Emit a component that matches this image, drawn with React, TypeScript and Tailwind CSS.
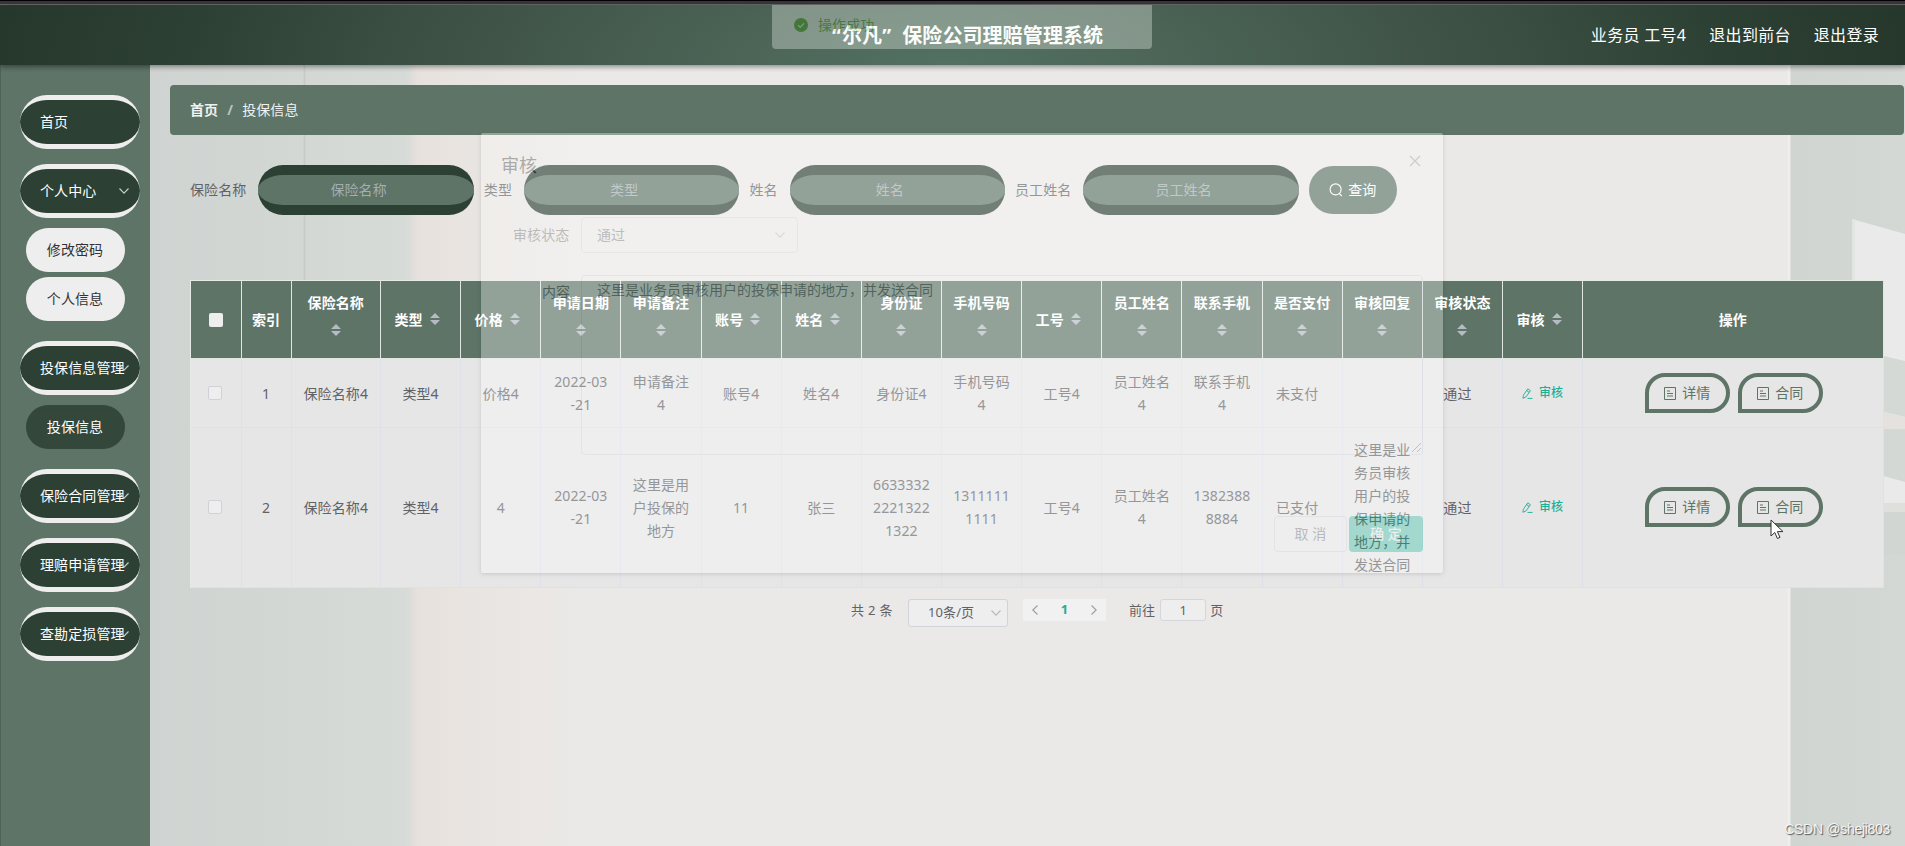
import React from 'react';

const FONT = "font-['Noto_Sans','Noto_Sans_CJK_SC',sans-serif]";

function Chevron({ className }: { className?: string }) {
  return (
    <svg viewBox="0 0 12 12" className={className} fill="none" stroke="currentColor" strokeWidth="1.1">
      <path d="M1.5 3.5 6 8.2l4.5-4.7" />
    </svg>
  );
}

function MenuPill({ label, arrow = true }: { label: string; arrow?: boolean }) {
  return (
    <div className="relative flex h-[54px] w-[120px] items-center rounded-full border-y-[5px] border-[#eeeeee] bg-[#2d4034] pl-5 text-sm text-white">
      <span className="whitespace-nowrap">{label}</span>
      {arrow && <Chevron className="absolute right-[10px] top-4 h-3 w-3 text-[#c9d0cb]" />}
    </div>
  );
}

function SubPill({ label, active = false }: { label: string; active?: boolean }) {
  return (
    <div
      className={
        active
          ? 'flex h-11 w-[99px] items-center justify-center rounded-full bg-[#33473b] pr-px text-sm text-white'
          : 'flex h-11 w-[99px] items-center justify-center rounded-full bg-[#eeeeee] pr-px text-sm text-[#333333]'
      }
    >
      {label}
    </div>
  );
}

function Sidebar() {
  return (
    <aside className="flex w-[150px] shrink-0 flex-col gap-[15px] bg-[#5d7467] pl-5 pt-[30px] shadow-[inset_1px_0_0_#4d6558]">
      <MenuPill label="首页" arrow={false} />
      <div>
        <MenuPill label="个人中心" />
        <div className="flex flex-col gap-[5px] pb-[5px] pl-[6px] pt-[10px]">
          <SubPill label="修改密码" />
          <SubPill label="个人信息" />
        </div>
      </div>
      <div>
        <MenuPill label="投保信息管理" />
        <div className="flex flex-col pb-[5px] pl-[6px] pt-[10px]">
          <SubPill label="投保信息" active />
        </div>
      </div>
      <MenuPill label="保险合同管理" />
      <MenuPill label="理赔申请管理" />
      <MenuPill label="查勘定损管理" />
    </aside>
  );
}

function Header() {
  return (
    <header className="relative z-10 flex h-[60px] shrink-0 items-center bg-[radial-gradient(ellipse_960px_330px_at_50%_100%,#527162_0%,#4d6658_20%,#3b4f42_58%,#2d4034_80%,#26382b_100%)] pl-[832px] shadow-[0_2px_5px_rgba(0,0,0,0.4)]">
      <h1 className="flex w-[272px] shrink-0 whitespace-nowrap pt-[2px] text-xl font-bold leading-[60px] text-white">
        <span className="w-[10px]">“</span>
        <span>尔凡</span>
        <span className="w-5">”</span>
        <span>保险公司理赔管理系统</span>
      </h1>
      <div className="flex flex-1 justify-end gap-[23px] pr-[26px] text-base tracking-[0.3px] text-white">
        <span>业务员 工号4</span>
        <span>退出到前台</span>
        <span>退出登录</span>
      </div>
    </header>
  );
}

function Field({ label }: { label: string }) {
  return (
    <div className="flex items-center">
      <label className="pr-3 text-sm text-[#606266]">{label}</label>
      <div className="flex h-[50px] w-[215.4px] items-center justify-center rounded-full border-y-[10px] border-[#2d4034] bg-[#5d7467] pr-[15px] text-sm text-[#a3aeb0]">
        {label}
      </div>
    </div>
  );
}

function Caret() {
  return (
    <span className="inline-flex h-[34px] w-6 shrink-0 flex-col items-center justify-center pb-[2px]">
      <svg viewBox="0 0 10 12" className="h-3 w-[10px]" fill="#b4bbc2">
        <path d="M0 5 5 0l5 5zM0 7h10l-5 5z" />
      </svg>
    </span>
  );
}

const headers: { t: string; wrap?: boolean }[] = [
  { t: '保险名称', wrap: true },
  { t: '类型' },
  { t: '价格' },
  { t: '申请日期', wrap: true },
  { t: '申请备注', wrap: true },
  { t: '账号' },
  { t: '姓名' },
  { t: '身份证', wrap: true },
  { t: '手机号码', wrap: true },
  { t: '工号' },
  { t: '员工姓名', wrap: true },
  { t: '联系手机', wrap: true },
  { t: '是否支付', wrap: true },
  { t: '审核回复', wrap: true },
  { t: '审核状态', wrap: true },
  { t: '审核' },
];

const rows: { h: string; cells: string[][] }[] = [
  {
    h: 'h-[69px]',
    cells: [
      ['1'], ['保险名称4'], ['类型4'], ['价格4'], ['2022-03', '-21'], ['申请备注', '4'], ['账号4'], ['姓名4'], ['身份证4'],
      ['手机号码', '4'], ['工号4'], ['员工姓名', '4'], ['联系手机', '4'], ['未支付'], [], ['通过'],
    ],
  },
  {
    h: 'h-[159.5px]',
    cells: [
      ['2'], ['保险名称4'], ['类型4'], ['4'], ['2022-03', '-21'], ['这里是用', '户投保的', '地方'], ['11'], ['张三'],
      ['6633332', '2221322', '1322'], ['1311111', '1111'], ['工号4'], ['员工姓名', '4'], ['1382388', '8884'], ['已支付'],
      ['这里是业', '务员审核', '用户的投', '保申请的', '地方，并', '发送合同'], ['通过'],
    ],
  },
];

const GRID = 'grid grid-cols-[50.5px_50px_89.5px_repeat(15,80.15px)_1fr]';
const HEAD_CELL = 'flex flex-col items-center justify-center border-b border-r border-[#dfe5e1] bg-[#5d7467]';
const BODY_CELL = 'flex flex-col items-center justify-center border-b border-r border-[#dfe0e8]';

function ActionButton({ label }: { label: string }) {
  return (
    <div className="flex h-[40px] w-[85px] items-center justify-center gap-[6px] rounded-[20px] rounded-bl-none border-4 border-[#5d7467] text-sm text-[#5d7467]">
      <svg viewBox="0 0 12 13" className="h-[13px] w-3" fill="none" stroke="currentColor" strokeWidth="1">
        <path d="M.5.5h11v12H.5zM3 4h3M3 6.5h6M3 9h6" />
      </svg>
      <span>{label}</span>
    </div>
  );
}

function DataTable() {
  return (
    <div className="w-[1693.5px] border-l border-t border-[#e6eae7]">
      <div className={`${GRID} h-[78px] text-sm font-bold leading-[23px] text-white`}>
        <div className={HEAD_CELL}>
          <span className="ml-px h-[14px] w-[14px] rounded-[2px] bg-[#eeeeee]" />
        </div>
        <div className={HEAD_CELL}>索引</div>
        {headers.map((h) =>
          h.wrap ? (
            <div key={h.t} className={HEAD_CELL}>
              <span>{h.t}</span>
              <Caret />
            </div>
          ) : (
            <div key={h.t} className="flex items-center justify-center border-b border-r border-[#dfe5e1] bg-[#5d7467]">
              <span>{h.t}</span>
              <Caret />
            </div>
          ),
        )}
        <div className={HEAD_CELL}>操作</div>
      </div>
      {rows.map((r, ri) => (
        <div key={ri} className={`${GRID} ${r.h} bg-[#e6e6e6] text-sm leading-[23px] text-[#606266]`}>
          <div className={BODY_CELL}>
            <span className="mr-[2px] h-[14px] w-[14px] rounded-[2px] border border-[#d0d2d8] bg-[#eeeeee]" />
          </div>
          {r.cells.map((lines, i) => (
            <div key={i} className={BODY_CELL}>
              {lines.map((l, k) => (
                <span key={k} className={i === 13 || i === 15 ? 'mr-[10px]' : ''}>
                  {l}
                </span>
              ))}
            </div>
          ))}
          <div className="flex items-center justify-center gap-[6px] border-b border-r border-[#dfe0e8] text-xs font-medium text-[#1fae98]">
            <svg viewBox="0 0 12 12" className="h-[11px] w-[11px]" fill="none" stroke="currentColor" strokeWidth="1">
              <path d="M1.5 8 6.3.9l2.9 2L4.4 9.7 1 11.2zM5 2.8l2.9 2M6 11.4h5.5" />
            </svg>
            <span>审核</span>
          </div>
          <div className="flex items-center justify-center gap-2 border-b border-r border-[#dfe0e8] pl-[2px]">
            <ActionButton label="详情" />
            <ActionButton label="合同" />
          </div>
        </div>
      ))}
    </div>
  );
}

function Pagination() {
  return (
    <div className="flex items-start pl-[681px] pt-[11px] text-[13px] text-[#606266]">
      <span className="w-[57px] tracking-[0.3px] leading-[22px]">共 2 条</span>
      <div className="flex h-7 w-[100px] items-center rounded-[3px] border border-[#cfd3da] bg-[#eeeeee] pl-[19px]">
        <span className="w-[62px]">10条/页</span>
        <Chevron className="h-3 w-3 text-[#b4b8c0]" />
      </div>
      <div className="ml-[15px] flex h-[22px] w-[83px] items-center justify-between bg-[#f1f1f1] px-[6px] text-[#9a9da3]">
        <Chevron className="h-3 w-3 rotate-90" />
        <span className="font-bold text-[#1fae98]">1</span>
        <Chevron className="h-3 w-3 -rotate-90" />
      </div>
      <span className="ml-[23px] leading-[22px]">前往</span>
      <div className="ml-[5px] h-[22px] w-[46px] rounded-[3px] border border-[#d3d6dc] bg-[#eeeeee] text-center text-[13px] leading-5">1</div>
      <span className="ml-1 leading-[22px]">页</span>
    </div>
  );
}

function ReviewDialog() {
  return (
    <div className="absolute left-[481px] top-[133px] z-20 h-[440px] w-[962px] rounded-[2px] bg-white opacity-[0.33] shadow-[0_1px_4px_rgba(0,0,0,0.4)]">
      <div className="flex items-start justify-between pl-5 pr-[22px] pt-[20px]">
        <span className="text-lg leading-6 text-[#303133]">审核</span>
        <svg viewBox="0 0 12 12" className="mt-[2px] h-3 w-3" stroke="#909399" strokeWidth="1.2">
          <path d="M1 1l10 10M11 1 1 11" />
        </svg>
      </div>
      <div className="mt-[40px] flex items-center pl-8 text-sm text-[#606266]">
        <span className="w-[68px]">审核状态</span>
        <div className="flex h-[36px] w-[217px] items-center justify-between rounded-[4px] border border-[#e2e4ea] pl-[15px] pr-[11px]">
          <span>通过</span>
          <Chevron className="h-3 w-3 text-[#b8bcc4]" />
        </div>
      </div>
      <div className="mt-[22px] flex pl-[61px] text-sm text-[#606266]">
        <span className="w-[39px] pt-[7px] text-[#303133]">内容</span>
        <div className="relative h-[180px] w-[842px] rounded-[4px] border border-[#dcdfe6] pl-[15px] pt-[4px] tracking-normal text-[#404246]">
          这里是业务员审核用户的投保申请的地方，并发送合同
          <svg viewBox="0 0 10 10" className="absolute bottom-[2px] right-[1px] h-[9px] w-[9px]" stroke="#606266" strokeWidth="1">
            <path d="M0 10 10 0M5.5 10 10 5.5" />
          </svg>
        </div>
      </div>
      <div className="mt-[61px] flex justify-end gap-[2px] pr-5 text-sm">
        <div className="flex h-9 w-[73px] items-center justify-center rounded-[4px] border border-[#dcdfe6] text-[#606266]">取 消</div>
        <div className="flex h-9 w-[74px] items-center justify-center rounded-[4px] bg-[#1abc9c] font-medium text-white">确 定</div>
      </div>
    </div>
  );
}

function Toast() {
  return (
    <div className="absolute left-[772px] top-[5px] z-20 flex h-11 w-[380px] items-center rounded-b-[4px] bg-[#f5f9f2] pb-1 pl-[22px] text-sm text-[#3f9a12] opacity-[0.33]">
      <svg viewBox="0 0 14 14" className="mr-[10px] h-[14px] w-[14px]">
        <circle cx="7" cy="7" r="7" fill="#2f9a00" />
        <path d="M4 7.2l2.2 2.1L10 5.4" fill="none" stroke="#fff" strokeWidth="1.1" />
      </svg>
      <span>操作成功</span>
    </div>
  );
}

function Backdrop() {
  return (
    <svg viewBox="0 0 1755 781" className="absolute inset-0 h-full w-full">
      <rect x="153.5" y="0" width="2" height="420" fill="#c9cbc9" />
      <path d="M1702 154 1755 169V480H1702z" fill="#eaeaea" />
      <path d="M1702 154H1705V216H1702z" fill="#e2e5e2" />
      <path d="M1730 290 1755 296V352L1730 346z" fill="#d5d9d6" />
      <path d="M1730 346 1755 352V364H1730z" fill="#e4e1df" />
      <path d="M1730 364H1755V417L1730 410z" fill="#d3d8d5" />
      <path d="M1700 447H1755V490H1700z" fill="#d2d6d3" />
      <path d="M1700 438H1755V447H1700z" fill="#dfdfdb" />
    </svg>
  );
}

export default function App() {
  return (
    <div className={`relative flex h-[846px] w-[1905px] flex-col overflow-hidden tracking-[0.1px] ${FONT}`}>
      <div className="h-[5px] shrink-0 border-b border-t border-b-[#6a696d] border-t-black bg-[#38363c]" />
      <Header />
      <div className="flex min-h-0 flex-1">
        <Sidebar />
        <main className="relative min-w-0 flex-1 bg-[linear-gradient(90deg,#cfd3d1_0px,#d2d6d3_90px,#d6dbd8_256px,#dcdcd9_260px,#e7e1dd_268px,#e8e4e0_310px,#ebe9e7_430px,#ebe9e7_1637px,#efeeed_1638px,#efeeed_1640px,#d0d5d2_1641px,#d4d8d5_1755px)]">
          <Backdrop />
          <div className="relative pl-5 pt-5">
            <nav className="flex h-[50px] w-[1734px] items-center gap-[9px] rounded-[4px] bg-[#5d7467] pl-5 text-sm text-[#f0f2f1]">
              <span className="font-bold">首页</span>
              <span className="font-bold text-[#b9c2c4]">/</span>
              <span>投保信息</span>
            </nav>
            <div className="flex h-[110px] items-center gap-[10px] pl-5">
              <Field label="保险名称" />
              <Field label="类型" />
              <Field label="姓名" />
              <Field label="员工姓名" />
              <div className="flex h-[48px] w-[88px] items-center justify-center gap-[5px] rounded-full bg-[#5d7467] text-sm text-white">
                <svg viewBox="0 0 14 14" className="h-[14px] w-[14px]" fill="none" stroke="currentColor" strokeWidth="1.1">
                  <circle cx="6.6" cy="6.4" r="5.5" />
                  <path d="M10.4 10.6 12.8 13" />
                </svg>
                <span>查询</span>
              </div>
            </div>
            <div className="pl-5 pt-[35px]">
              <DataTable />
            </div>
            <Pagination />
          </div>
        </main>
      </div>
      <ReviewDialog />
      <Toast />
      <svg viewBox="0 0 14 21" className="absolute left-[1770px] top-[519px] z-30 h-[21px] w-[14px]">
        <path d="M1 1v16l3.8-3.5 2.6 6 2.6-1.1-2.6-5.8H13z" fill="#fff" stroke="#333" strokeWidth="1" />
      </svg>
      <div className="absolute bottom-[7px] right-[15px] z-30 font-['Liberation_Sans',sans-serif] text-sm leading-5 tracking-[-0.3px] text-[#f4f4f4] [text-shadow:1px_1px_1px_#555]">
        CSDN @sheji803
      </div>
    </div>
  );
}
